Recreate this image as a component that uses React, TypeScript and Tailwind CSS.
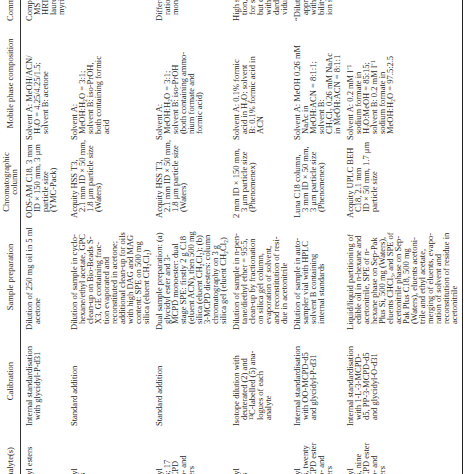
import React from "react";

type Row = {
  analyte: string[];
  cal: string[];
  prep: string[];
  column: string[];
  mobile: string[];
  comments: string[];
};

const rows: Row[] = [
  {
    analyte: ["Glycidyl esters"],
    cal: ["Internal standardisation", "with glycidyl-P-d31"],
    prep: ["Dilution of 250 mg oil in 5 ml", "acetone"],
    column: ["ODS-AM C18, 3 mm", "ID × 150 mm, 3 μm", "particle size", "(YMC-Pack)"],
    mobile: ["Solvent A: MeOH/ACN/", "H₂O = 4.25/4.25/1.5;", "solvent B: acetone"],
    comments: ["Comparison of LC-", "MS with LC-", "HRTOFMS; only", "laureate and", "myristate identified"],
  },
  {
    analyte: ["Glycidyl", "esters"],
    cal: ["Standard addition"],
    prep: [
      "Dilution of sample in cyclo-",
      "hexane/ethyl acetate, GPC",
      "clean-up on Bio-Beads S-",
      "X3, GE containing frac-",
      "tion evaporated and",
      "reconstituted in acetone;",
      "additional clean-up for oils",
      "with high DAG and MAG",
      "content: SPE on 500 mg",
      "silica (eluent CH₂Cl₂)",
    ],
    column: ["Acquity HSS T3,", "2.1 mm ID × 50 mm,", "1.8 μm particle size", "(Waters)"],
    mobile: ["Solvent A:", "MeOH:H₂O = 3:1;", "solvent B: iso-PrOH,", "both containing formic", "acid"],
    comments: [],
  },
  {
    analyte: ["Glycidyl", "esters; 17", "3-MCPD", "mono- and", "diesters"],
    cal: ["Standard addition"],
    prep: [
      "Dual sample preparation: (a)",
      "glycidyl ester and 3-",
      "MCPD monoester: dual",
      "stage SPE: firstly 2 g C18",
      "(eluent ACN), then 500 mg",
      "silica (eluent CH₂Cl₂); (b)",
      "3-MCPD diesters: column",
      "chromatography on 3 g",
      "silica gel (eluent CH₂Cl₂)",
    ],
    column: ["Acquity HSS T3,", "2.1 mm ID × 50 mm,", "1.8 μm particle size", "(Waters)"],
    mobile: [
      "Solvent A:",
      "MeOH:H₂O = 3:1;",
      "solvent B: iso-PrOH",
      "(both containing ammo-",
      "nium formate and",
      "formic acid)",
    ],
    comments: ["Different sample prepa-", "ration for", "mono- and diesters"],
  },
  {
    analyte: ["Glycidyl", "esters"],
    cal: ["Isotope dilution with", "deuterated (2) and", "¹³C-labelled (5) ana-", "logues of each", "analyte"],
    prep: [
      "Dilution of sample in n-pen-",
      "tane/diethyl ether = 95:5,",
      "clean-up by fractionation",
      "on silica gel column,",
      "evaporation of solvent,",
      "and reconstitution of resi-",
      "due in acetonitrile",
    ],
    column: ["2 mm ID × 150 mm,", "3 μm particle size", "(Phenomenex)"],
    mobile: ["Solvent A: 0.1% formic", "acid in H₂O; solvent", "B: 0.1% formic acid in", "ACN"],
    comments: [
      "High solvent consump-",
      "tion, poor recoveries",
      "for some analytes,",
      "but compensated",
      "with labelled stan-",
      "dards for each indi-",
      "vidual standard",
    ],
  },
  {
    analyte: ["Glycidyl", "esters, twenty", "3-MCPD ester", "mono- and", "diesters"],
    cal: ["Internal standardisation", "with OO-MCPD-d5", "and glycidyl-P-d31"],
    prep: ["Dilution of sample in auto-", "sampler vial with HPLC", "solvent B containing", "internal standards"],
    column: ["Luna C18 column,", "3 mm ID × 50 mm,", "3 μm particle size", "(Phenomenex)"],
    mobile: [
      "Solvent A: MeOH 0.26 mM",
      "NaAc in",
      "MeOH:ACN = 8:1:1;",
      "solvent B:",
      "CH₂Cl₂ 0.26 mM NaAc",
      "in MeOH:ACN = 8:1:1",
    ],
    comments: ["“Dilute-and-shoot”", "approach; problems", "with instrument sta-", "bility, correction of", "ion source"],
  },
  {
    analyte: ["Glycidyl", "esters, nine", "3-MCPD ester", "mono- and", "diesters"],
    cal: ["Internal standardisation", "with 1-L-3-MCPD-", "d5, PP-3-MCPD-d5", "and glycidyl-O-d31"],
    prep: [
      "Liquid/liquid partitioning of",
      "edible oil in n-hexane and",
      "acetonitrile, SPE of n-",
      "hexane phase on Sep-Pak",
      "Plus Si, 500 mg (Waters),",
      "eluents CHCl₃, and SPE of",
      "acetonitrile phase on Sep-",
      "Pak Plus C18, 500 mg",
      "(Waters), eluents acetoni-",
      "trile and ethyl acetate,",
      "merging of eluents, evapo-",
      "ration of solvent and",
      "reconstitution of residue in",
      "acetonitrile",
    ],
    column: ["Acquity UPLC BEH", "C18, 2.1 mm", "ID × 50 mm, 1.7 μm", "particle size"],
    mobile: [
      "Solvent A: 0.2 mM l⁻¹",
      "sodium formate in",
      "H₂O:MeOH = 85:15;",
      "solvent B: 0.2 mM l⁻¹",
      "sodium formate in",
      "MeOH:H₂O = 97.5:2.5",
    ],
    comments: [],
  },
];

function Cell({ lines }: { lines: string[] }) {
  return (
    <div>
      {lines.map((l, i) => (
        <div key={i} className={i === 0 ? "whitespace-nowrap" : "whitespace-nowrap pl-[6px]"}>
          {l}
        </div>
      ))}
    </div>
  );
}

const gridCols = "grid grid-cols-[66px_90px_106px_72px_113px_90px] gap-x-[6px]";

export default function App() {
  return (
    <div className="relative h-[474px] w-[474px] overflow-hidden bg-white">
      <div className="absolute left-0 top-0 h-[474px] w-[580px] origin-top-left [transform:translateY(498px)_rotate(-90deg)] font-['Liberation_Serif','Times_New_Roman',serif] text-[8.5px] leading-[8px] text-[#2a2a2a]">
        <div className="flex h-[463px] flex-col border-b-[1.5px] border-[#222]">
          <div className={`${gridCols} items-center border-b border-[#333] pb-[2px] pt-[2px]`}>
            <div className="text-center">Analyte(s)</div>
            <div className="text-center">Calibration</div>
            <div className="text-center">Sample preparation</div>
            <div className="text-center">
              <div>Chromatographic</div>
              <div>column</div>
            </div>
            <div className="text-center">Mobile phase composition</div>
            <div className="text-left">Comments</div>
          </div>
          <div className="flex flex-col gap-[5px] pt-[4px]">
            {rows.map((r, i) => (
              <div key={i} className={gridCols}>
                <Cell lines={r.analyte} />
                <Cell lines={r.cal} />
                <Cell lines={r.prep} />
                <Cell lines={r.column} />
                <Cell lines={r.mobile} />
                <Cell lines={r.comments} />
              </div>
            ))}
          </div>
        </div>
      </div>
    </div>
  );
}
